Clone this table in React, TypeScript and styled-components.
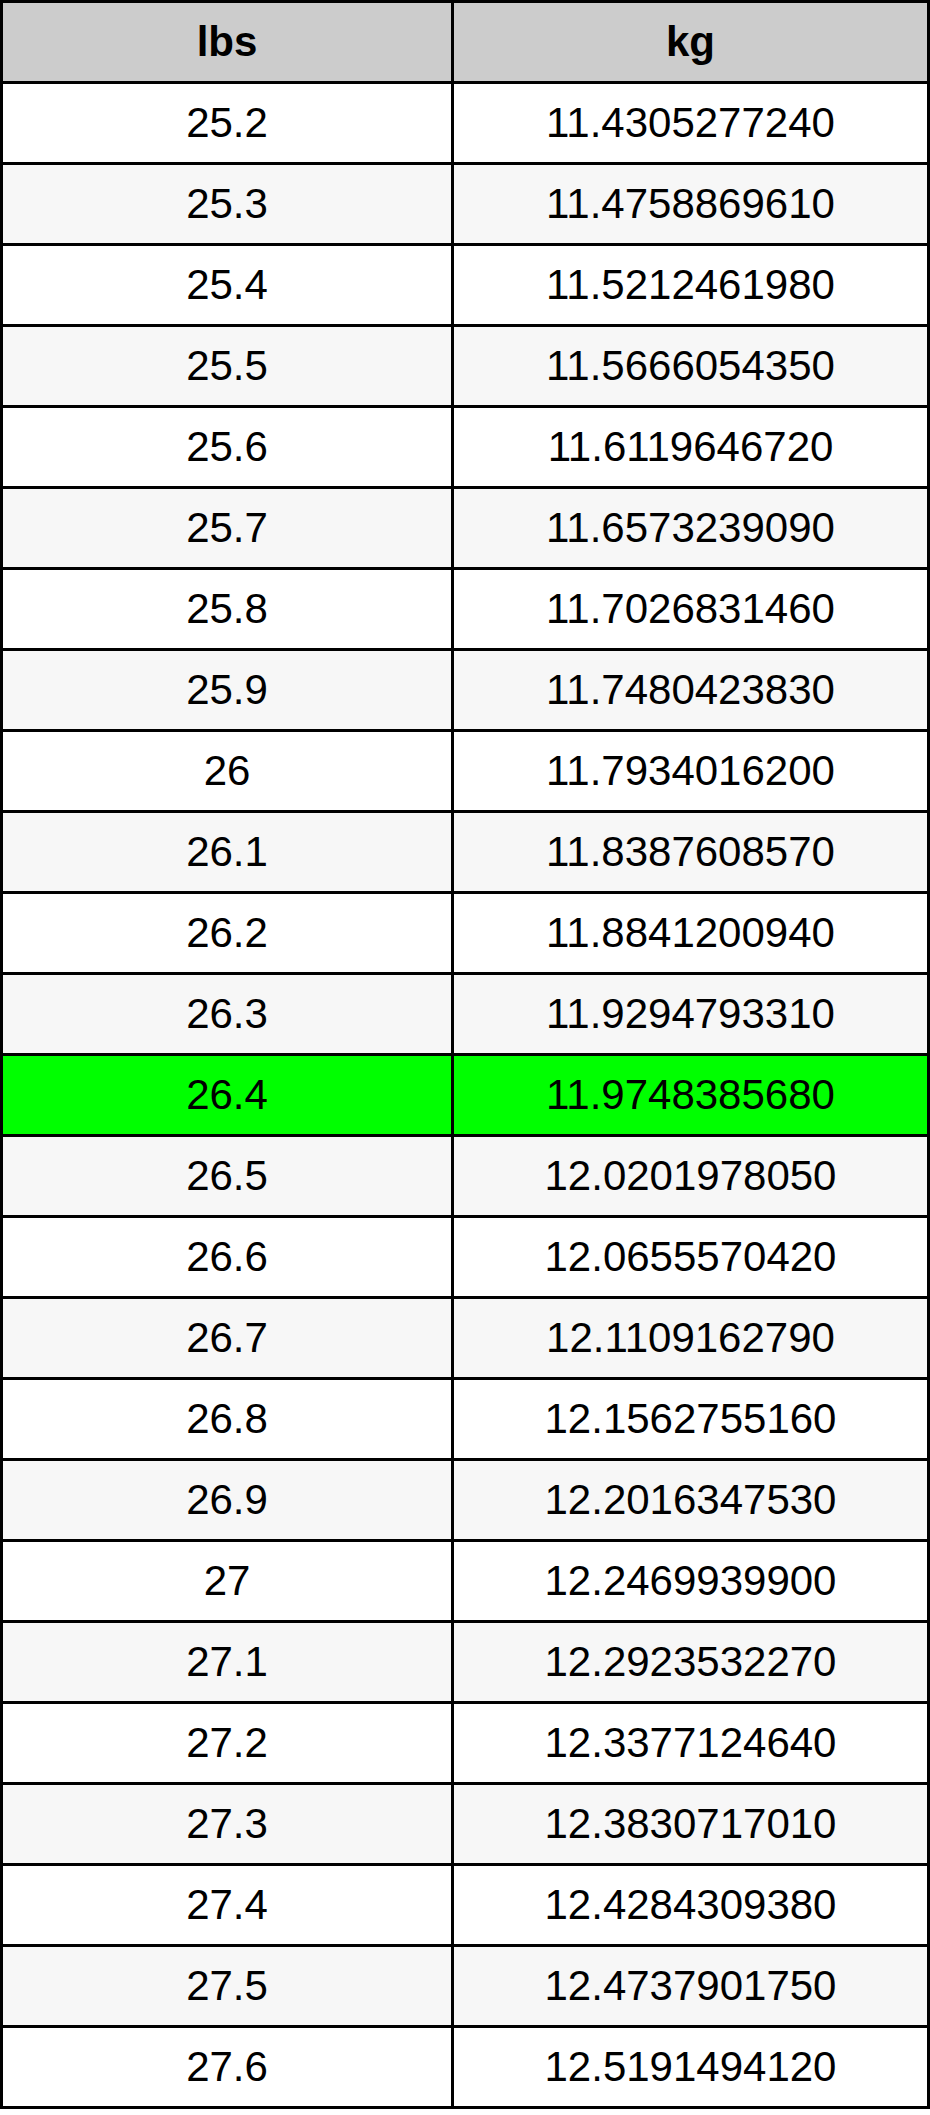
import React from 'react';
import styled, { createGlobalStyle } from 'styled-components';

const GlobalStyle = createGlobalStyle`
  html, body {
    margin: 0;
    padding: 0;
    background: #ffffff;
  }
`;

const Table = styled.div`
  width: 930px;
  box-sizing: border-box;
  display: grid;
  grid-template-columns: 448px 473px;
  grid-auto-rows: 78px;
  gap: 3px;
  padding: 3px;
  background: #000000;
  font-family: 'Liberation Sans', Arial, sans-serif;
  font-size: 42px;
  color: #000000;
`;

const Cell = styled.div<{ $bg: string; $bold?: boolean }>`
  display: flex;
  align-items: center;
  justify-content: center;
  background: ${(p) => p.$bg};
  font-weight: ${(p) => (p.$bold ? 700 : 400)};
`;

const KG_PER_LB = 45359237; // 0.45359237 * 1e8

const formatKg = (tenths: number) => {
  // tenths of a pound * 45359237 / 1e9 gives kg with 9 decimals
  const v = tenths * KG_PER_LB;
  const whole = Math.floor(v / 1e9);
  const frac = String(v % 1e9).padStart(9, '0');
  return `${whole}.${frac}0`;
};

const formatLbs = (tenths: number) =>
  tenths % 10 === 0 ? String(tenths / 10) : (tenths / 10).toFixed(1);

const HIGHLIGHT = 264;

const rows = Array.from({ length: 25 }, (_, i) => 252 + i);

const App = () => {
  return (
    <>
      <GlobalStyle />
      <Table>
        <Cell $bg="#cccccc" $bold>lbs</Cell>
        <Cell $bg="#cccccc" $bold>kg</Cell>
        {rows.map((t, i) => {
          const bg = t === HIGHLIGHT ? '#00ff00' : i % 2 === 1 ? '#f7f7f7' : '#ffffff';
          return (
            <React.Fragment key={t}>
              <Cell $bg={bg}>{formatLbs(t)}</Cell>
              <Cell $bg={bg}>{formatKg(t)}</Cell>
            </React.Fragment>
          );
        })}
      </Table>
    </>
  );
};

export default App;
